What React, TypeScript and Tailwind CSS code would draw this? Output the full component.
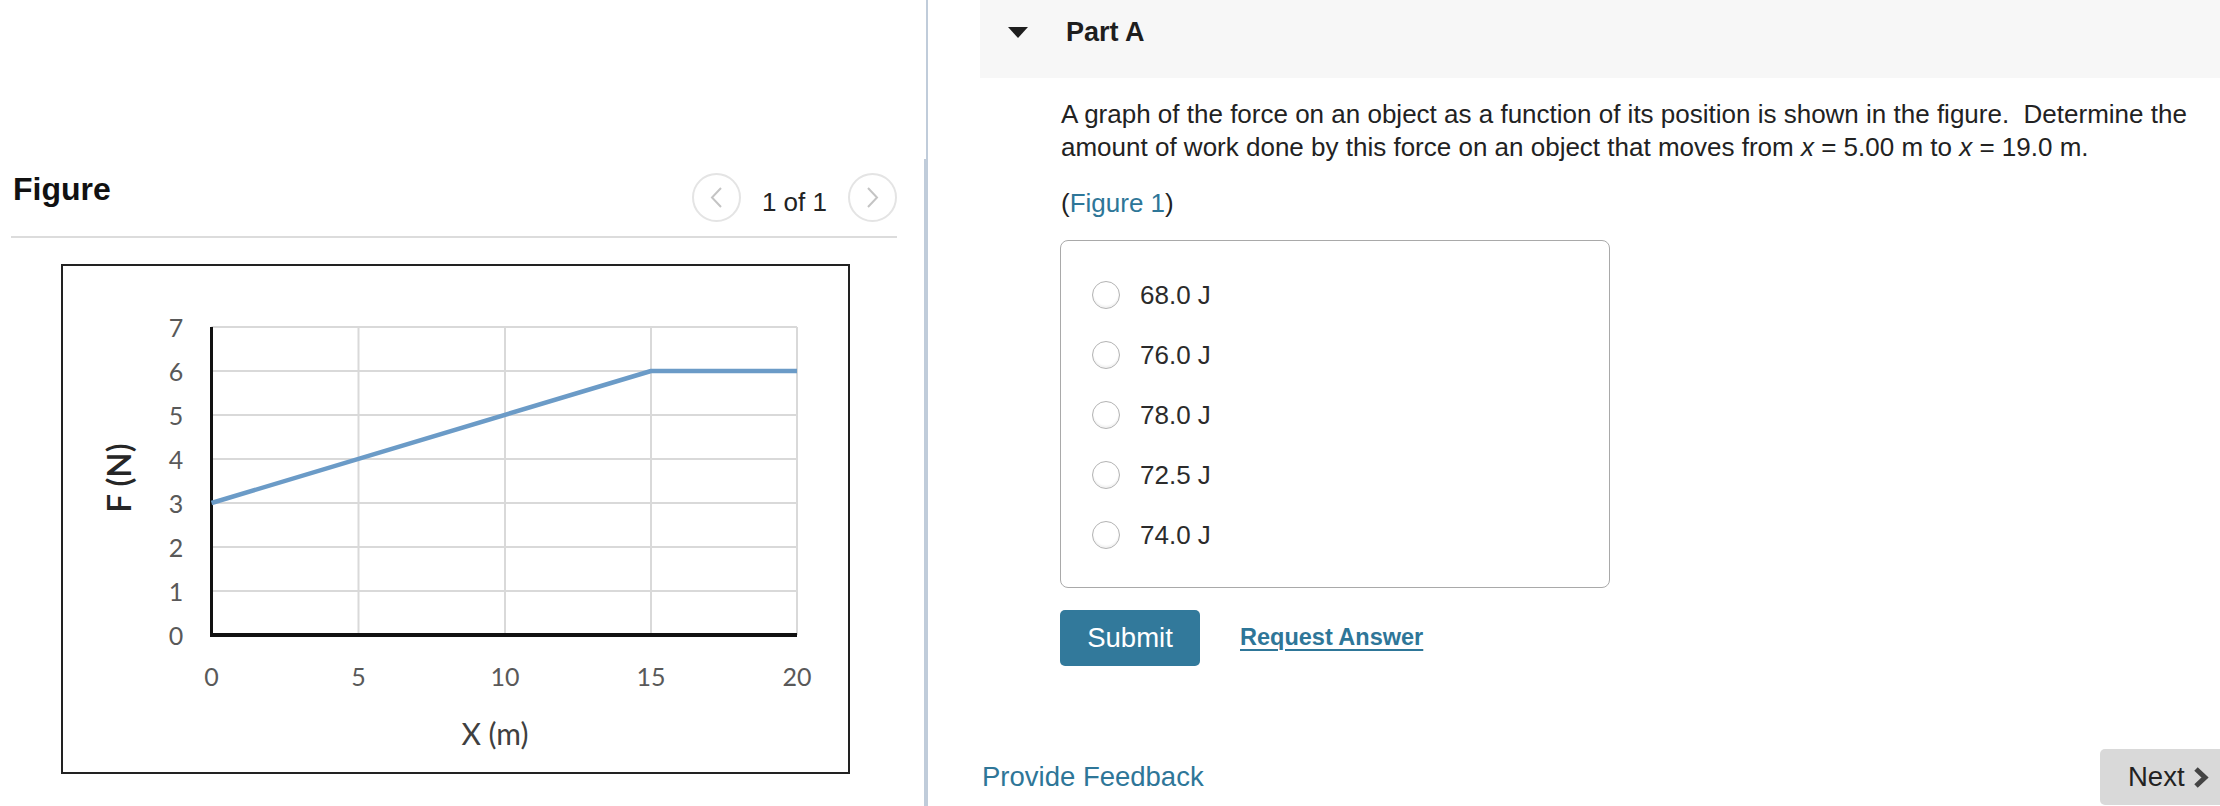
import React from "react";

const xs = [148.5, 295.5, 442, 588, 734];
const yv = (v: number) => 369 - 44 * v;

function Chart() {
  return (
    <svg width="785" height="506" viewBox="0 0 785 506" className="block">
      {[1, 2, 3, 4, 5, 6, 7].map((v) => (
        <line key={"h" + v} x1={148.5} x2={734} y1={yv(v)} y2={yv(v)} stroke="#d9d9d9" strokeWidth={2} />
      ))}
      {xs.slice(1).map((x, i) => (
        <line key={"v" + i} x1={x} x2={x} y1={yv(7)} y2={yv(0)} stroke="#d9d9d9" strokeWidth={2} />
      ))}
      <line x1={148.5} x2={148.5} y1={yv(7)} y2={yv(0) + 2} stroke="#111" strokeWidth={3} />
      <line x1={147} x2={734} y1={yv(0)} y2={yv(0)} stroke="#111" strokeWidth={4} />
      <polyline
        points={`148.5,${yv(3)} 588,${yv(6)} 734,${yv(6)}`}
        fill="none"
        stroke="#6b9bc7"
        strokeWidth={4.5}
        strokeLinejoin="round"
      />
      {[0, 1, 2, 3, 4, 5, 6, 7].map((v) => (
        <text
          key={"yl" + v}
          x={113}
          y={yv(v)}
          textAnchor="middle"
          dominantBaseline="central"
          fontFamily="Lato, 'Open Sans', sans-serif"
          fontSize={25}
          fill="#595959"
        >
          {v}
        </text>
      ))}
      {[0, 5, 10, 15, 20].map((v, i) => (
        <text
          key={"xl" + v}
          x={xs[i]}
          y={410}
          textAnchor="middle"
          dominantBaseline="central"
          fontFamily="Lato, 'Open Sans', sans-serif"
          fontSize={25}
          fill="#595959"
        >
          {v}
        </text>
      ))}
      <text
        x={432}
        y={467}
        textAnchor="middle"
        dominantBaseline="central"
        fontFamily="Lato, 'Open Sans', sans-serif"
        fontSize={30}
        fill="#404040"
      >
        X (m)
      </text>
      <text
        x={55}
        y={212}
        textAnchor="middle"
        dominantBaseline="central"
        fontFamily="Lato, 'Open Sans', sans-serif"
        fontSize={33}
        fontWeight={600}
        fill="#262626"
        transform="rotate(-90 55 212)"
      >
        F (N)
      </text>
    </svg>
  );
}

function Chevron({ dir }: { dir: "left" | "right" }) {
  return (
    <svg width="13" height="21" viewBox="0 0 13 21">
      <polyline
        points={dir === "left" ? "11,1 2,10.5 11,20" : "2,1 11,10.5 2,20"}
        fill="none"
        stroke="#c4c4c4"
        strokeWidth={2}
      />
    </svg>
  );
}

function Radio({ label }: { label: string }) {
  return (
    <div className="flex items-center h-[60px]">
      <div className="w-[28px] h-[28px] rounded-full border border-[#b3b3b3] bg-white shadow-[inset_0_-2px_2px_rgba(0,0,0,0.06)]" />
      <span className="ml-[20px] text-[26px] text-[#2b2b2b] leading-none">{label}</span>
    </div>
  );
}

export default function App() {
  return (
    <div className="w-[2220px] h-[806px] flex bg-white overflow-hidden font-['Liberation_Sans',Arial,sans-serif]">
      {/* Left panel */}
      <div className="w-[926px] flex flex-col shrink-0">
        <div className="h-[159px] shrink-0" />
        <div className="flex-1 border-r-2 border-[#c0ccda] pl-[11px] pr-[27px] pt-[14px]">
          <div className="flex items-start justify-between h-[49px]">
            <div className="mt-[1px] ml-[2px] text-[32px] leading-[31px] font-bold text-[#111]">Figure</div>
            <div className="flex items-center gap-[21px] h-[49px]">
              <div className="w-[49px] h-[49px] rounded-full border-2 border-[#e4e4e4] flex items-center justify-center">
                <Chevron dir="left" />
              </div>
              <span className="pt-[8px] text-[26px] leading-none text-[#222]">1 of 1</span>
              <div className="w-[49px] h-[49px] rounded-full border-2 border-[#e4e4e4] flex items-center justify-center">
                <Chevron dir="right" />
              </div>
            </div>
          </div>
          <div className="mt-[14px] h-[2px] bg-[#dcdcdc]" />
          <div className="mt-[26px] ml-[50px] w-[789px] h-[510px] border-2 border-[#222] bg-white">
            <Chart />
          </div>
        </div>
      </div>

      {/* Right panel */}
      <div className="flex-1 border-l-2 border-[#c0ccda] pl-[52px] flex flex-col pb-[1px]">
        <div className="h-[78px] bg-[#f7f7f7] flex items-start shrink-0">
          <svg width="20" height="11" viewBox="0 0 20 11" className="ml-[28px] mt-[27px]">
            <polygon points="0,0 20,0 10,11" fill="#1e1e1e" />
          </svg>
          <span className="ml-[38px] mt-[19px] text-[27px] leading-[27px] font-bold text-[#1e1e1e]">Part A</span>
        </div>

        <div className="pl-[81px] flex flex-col">
          <p className="mt-[20px] text-[26px] leading-[33px] text-[#222] whitespace-nowrap">
            A graph of the force on an object as a function of its position is shown in the figure.{"\u00a0 "}Determine the
            <br />
            amount of work done by this force on an object that moves from <i>x</i> = 5.00 m to <i>x</i> = 19.0 m.
          </p>
          <p className="mt-[22px] text-[26px] leading-[34px] text-[#222]">
            (<span className="text-[#2e7698]">Figure 1</span>)
          </p>

          <div className="mt-[20px] -ml-[1px] w-[550px] h-[348px] border-[1.5px] border-[#a9a9a9] rounded-[8px] pt-[24px] pl-[31px] flex flex-col">
            <Radio label="68.0 J" />
            <Radio label="76.0 J" />
            <Radio label="78.0 J" />
            <Radio label="72.5 J" />
            <Radio label="74.0 J" />
          </div>

          <div className="mt-[22px] -ml-[1px] flex items-center">
            <button className="w-[140px] h-[56px] rounded-[5px] bg-[#32799b] text-white text-[27.5px] leading-none">
              Submit
            </button>
            <span className="ml-[40px] text-[23.5px] font-bold text-[#2e7698] underline underline-offset-[4px] decoration-2 leading-none">
              Request Answer
            </span>
          </div>
        </div>

        <div className="mt-auto flex items-center justify-between h-[56px]">
          <span className="ml-[2px] text-[27.5px] leading-none text-[#2e7698]">Provide Feedback</span>
          <div className="w-[120px] h-[56px] rounded-l-[5px] bg-[#d9d9d9] flex items-center pl-[28px]">
            <span className="text-[27.5px] leading-none text-[#222]">Next</span>
            <svg width="16" height="21" viewBox="0 0 16 21" className="ml-[8px]">
              <polyline points="3,2 12,10.5 3,19" fill="none" stroke="#444" strokeWidth={5} />
            </svg>
          </div>
        </div>
      </div>
    </div>
  );
}
